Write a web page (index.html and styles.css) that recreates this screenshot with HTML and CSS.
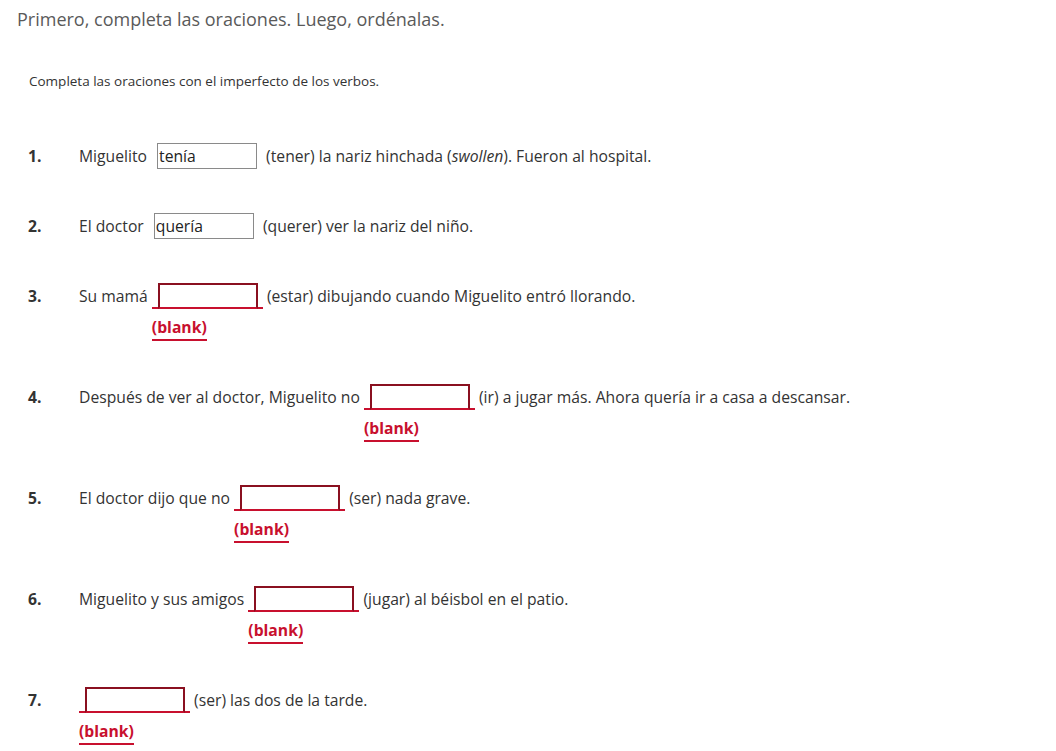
FILE: index.html
```html
<!DOCTYPE html>
<html lang="es">
<head>
<meta charset="utf-8">
<title>Imperfecto</title>
<link rel="stylesheet" href="styles.css">
</head>
<body>
<div class="page">
  <h1 class="title">Primero, completa las oraciones. Luego, ordénalas.</h1>
  <p class="instructions">Completa las oraciones con el imperfecto de los verbos.</p>
  <ol class="items">
    <li class="item">
      <span class="num">1.</span>
      <span class="text">Miguelito <span class="slot"><input class="field" type="text" value="tenía"></span> (tener) la nariz hinchada (<em>swollen</em>). Fueron al hospital.</span>
    </li>
    <li class="item">
      <span class="num">2.</span>
      <span class="text">El doctor <span class="slot"><input class="field" type="text" value="quería"></span> (querer) ver la nariz del niño.</span>
    </li>
    <li class="item has-fb">
      <span class="num">3.</span>
      <span class="text">Su mamá <span class="slot blank"><input class="field" type="text" value=""><span class="fb">(blank)</span></span> (estar) dibujando cuando Miguelito entró llorando.</span>
    </li>
    <li class="item has-fb">
      <span class="num">4.</span>
      <span class="text">Después de ver al doctor, Miguelito no <span class="slot blank"><input class="field" type="text" value=""><span class="fb">(blank)</span></span> (ir) a jugar más. Ahora quería ir a casa a descansar.</span>
    </li>
    <li class="item has-fb">
      <span class="num">5.</span>
      <span class="text">El doctor dijo que no <span class="slot blank"><input class="field" type="text" value=""><span class="fb">(blank)</span></span> (ser) nada grave.</span>
    </li>
    <li class="item has-fb">
      <span class="num">6.</span>
      <span class="text">Miguelito y sus amigos <span class="slot blank"><input class="field" type="text" value=""><span class="fb">(blank)</span></span> (jugar) al béisbol en el patio.</span>
    </li>
    <li class="item has-fb">
      <span class="num">7.</span>
      <span class="text"><span class="slot blank first"><input class="field" type="text" value=""><span class="fb">(blank)</span></span> (ser) las dos de la tarde.</span>
    </li>
  </ol>
</div>
</body>
</html>
```
FILE: styles.css
```css
html, body {
  margin: 0;
  padding: 0;
  background: #ffffff;
}
body {
  font-family: "Open Sans", "Liberation Sans", sans-serif;
  color: #333333;
}
.page {
  padding: 6px 17px 0 17px;
}
.title {
  margin: 0;
  font-size: 18px;
  font-weight: 400;
  line-height: 26px;
  color: #5a5a5a;
}
.instructions {
  margin: 40px 0 0 12px;
  font-size: 13.5px;
  line-height: 18px;
  color: #333333;
}
.items {
  list-style: none;
  margin: 53px 0 0 0;
  padding: 0 0 0 11px;
}
.item {
  display: flex;
  align-items: baseline;
  font-size: 15.7px;
  line-height: 22px;
  margin-bottom: 44px;
}
.item.has-fb {
  margin-bottom: 43px;
}
.num {
  flex: 0 0 51px;
  font-weight: 700;
}
.text {
  flex: 1 1 auto;
}
.slot {
  display: inline-flex;
  flex-direction: column;
  align-items: flex-start;
  vertical-align: baseline;
  padding: 0 5px 0 6px;
}
.field {
  box-sizing: border-box;
  width: 100px;
  height: 26px;
  margin: 0;
  padding: 0 1px;
  font-family: "Open Sans", "Liberation Sans", sans-serif;
  font-size: 15.7px;
  color: #222222;
  border: 1px solid #8a8a8a;
  border-radius: 0;
  background: #ffffff;
}
.slot.blank {
  background-image: linear-gradient(#c8102e, #c8102e);
  background-repeat: no-repeat;
  background-size: 100% 2px;
  background-position: 0 24px;
  padding: 0;
}
.slot.blank .field {
  margin: 0 5px 0 6px;
  border: 2px solid #8a1020;
  border-bottom-color: #c8102e;
}
.fb {
  margin-top: 7px;
  font-weight: 700;
  color: #c8102e;
  line-height: 22px;
  border-bottom: 2px solid #c8102e;
  padding-bottom: 1px;
}
```
